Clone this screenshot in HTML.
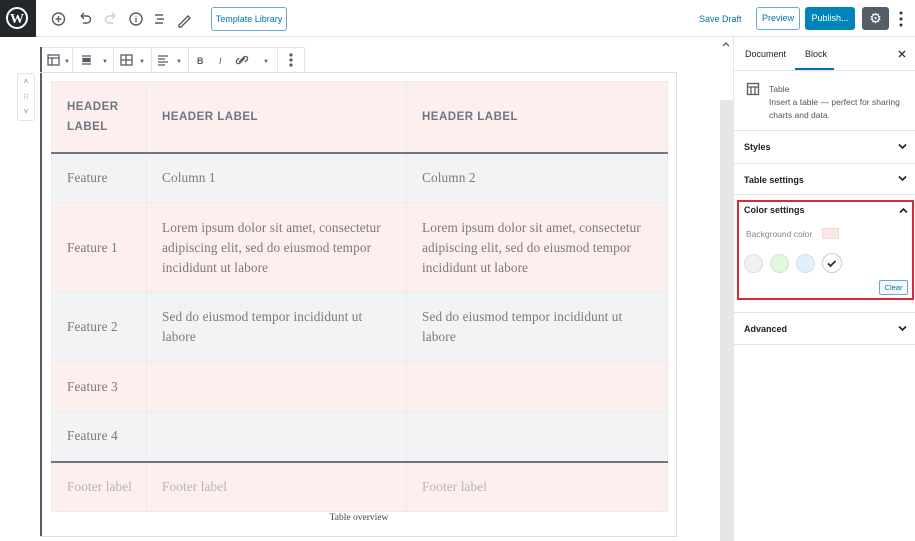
<!DOCTYPE html>
<html><head><meta charset="utf-8"><style>
*{box-sizing:border-box;margin:0;padding:0}
body{width:915px;height:541px;overflow:hidden;background:#fff;font-family:"Liberation Sans",sans-serif;position:relative}
.abs{position:absolute}
.top{left:0;top:0;width:915px;height:37px;border-bottom:1px solid #e2e4e7}
.wp{left:0;top:0;width:36px;height:37px;background:#23282d}
.tbl{left:51px;top:81px;width:616px;border-collapse:collapse;table-layout:fixed;font-family:"Liberation Serif",serif;color:#7a7a7a;font-size:13.3px;letter-spacing:.1px;line-height:20px}
.tbl td{border:1px solid #ecebeb;padding:0 15px;vertical-align:middle}
.tbl td:first-child{white-space:nowrap;padding-right:0}
.tbl .hd td:first-child{white-space:normal}
.pink td{background:#fcefed}
.gray td{background:#f2f3f5}
.hd td{font-family:"Liberation Sans",sans-serif;font-weight:bold;color:#6c7781;font-size:11.5px;letter-spacing:.5px;height:71px;border-bottom:2px solid #6c7781}
.sb{left:733px;top:37px;width:182px;height:504px;border-left:1px solid #e2e4e7}
.sec{position:absolute;left:0;width:182px;border-top:1px solid #e2e4e7;font-size:9px;font-weight:bold;color:#1e1e1e;padding-left:10px}
.chev{position:absolute;right:9px;top:50%;margin-top:-4px}
</style></head><body>
<div class="abs top"></div>
<div class="abs wp"><svg width="36" height="37"><circle cx="17" cy="18" r="10" fill="none" stroke="#fff" stroke-width="2"/><text x="17" y="23" font-size="14" font-weight="bold" fill="#fff" text-anchor="middle" font-family="Liberation Serif">W</text></svg></div>
<svg class="abs" style="left:50px;top:10px" width="150" height="18" fill="none" stroke="#555d66" stroke-width="1.4">
<circle cx="8.5" cy="9" r="6"/><path d="M8.5 6v6M5.5 9h6"/>
<path d="M31 6h6a3.5 3.5 0 010 7h-4M31 6l3-3M31 6l3 3"/>
<path d="M65 6h-6a3.5 3.5 0 000 7h4M65 6l-3-3M65 6l-3 3" stroke="#ccd0d4"/>
<circle cx="86" cy="9" r="6"/><path d="M86 8v4M86 6v.5"/>
<path d="M105 5h8M107 9h7M105 13h8"/>
<path d="M129 15l9-9 2 2-9 9h-2z"/>
</svg>
<div class="abs" style="left:211px;top:7px;width:76px;height:24px;border:1px solid #6aa9cf;border-radius:3px;font-size:9px;color:#0073aa;text-align:center;line-height:22px">Template Library</div>
<div class="abs" style="left:699px;top:14px;font-size:9px;color:#0073aa">Save Draft</div>
<div class="abs" style="left:756px;top:7px;width:44px;height:23px;border:1px solid #6aa9cf;border-radius:3px;font-size:9px;color:#0073aa;text-align:center;line-height:21px">Preview</div>
<div class="abs" style="left:805px;top:7px;width:50px;height:23px;background:#0085ba;border-radius:3px;font-size:9px;color:#fff;text-align:center;line-height:23px">Publish...</div>
<div class="abs" style="left:862px;top:7px;width:27px;height:23px;background:#555d66;border-radius:3px;color:#fff;text-align:center;line-height:23px;font-size:14px">⚙</div>
<svg class="abs" style="left:898px;top:10px" width="6" height="18"><circle cx="3" cy="3" r="1.5" fill="#333"/><circle cx="3" cy="9" r="1.5" fill="#333"/><circle cx="3" cy="15" r="1.5" fill="#333"/></svg>
<div class="abs" style="left:40px;top:47px;width:265px;height:26px;border:1px solid #e2e4e7;border-left:2px solid #555d66"></div>
<div class="abs" style="left:40px;top:47px;width:2px;height:490px;background:#555d66"></div>
<div class="abs" style="left:40px;top:72px;width:637px;height:465px;border:1px solid #ddd;border-left:none"></div>
<div class="abs" style="left:72px;top:48px;width:1px;height:24px;background:#e2e4e7"></div>
<div class="abs" style="left:113px;top:48px;width:1px;height:24px;background:#e2e4e7"></div>
<div class="abs" style="left:151px;top:48px;width:1px;height:24px;background:#e2e4e7"></div>
<div class="abs" style="left:188px;top:48px;width:1px;height:24px;background:#e2e4e7"></div>
<div class="abs" style="left:277px;top:48px;width:1px;height:24px;background:#e2e4e7"></div>
<svg class="abs" style="left:44px;top:50px" width="260" height="20" fill="none" stroke="#555d66" stroke-width="1.3" font-family="Liberation Sans" font-size="9">
<rect x="4" y="5" width="11" height="10"/><path d="M4 8h11M8 8v7"/><text x="20" y="13" stroke="none" fill="#555d66" font-size="6">▼</text>
<path d="M38 6h9M38 14h9"/><rect x="39" y="8.5" width="7" height="3" fill="#555d66"/><text x="58" y="13" stroke="none" fill="#555d66" font-size="6">▼</text>
<rect x="77" y="5" width="11" height="10"/><path d="M77 10h11M82 5v10"/><text x="95" y="13" stroke="none" fill="#555d66" font-size="6">▼</text>
<path d="M114 6h10M114 9h7M114 12h10M114 15h7"/><text x="132" y="13" stroke="none" fill="#555d66" font-size="6">▼</text>
<text x="153" y="14" stroke="none" fill="#555d66" font-weight="bold">B</text>
<text x="175" y="14" stroke="none" fill="#555d66" font-style="italic">I</text>
<path d="M195 12l5-5a2 2 0 013 3l-2 2M201 8l-5 5a2 2 0 01-3-3l2-2"/><text x="219" y="13" stroke="none" fill="#555d66" font-size="6">▼</text>
<circle cx="247" cy="5" r="1" fill="#555d66"/><circle cx="247" cy="10" r="1" fill="#555d66"/><circle cx="247" cy="15" r="1" fill="#555d66"/>
</svg>
<div class="abs" style="left:17px;top:73px;width:18px;height:48px;border:1px solid #e2e4e7;border-radius:3px;font-size:8px;color:#888;text-align:center;line-height:15px">˄<br>⁝⁝<br>˅</div>
<table class="abs tbl">
<colgroup><col style="width:95px"><col style="width:260px"><col style="width:261px"></colgroup>
<tr class="pink hd"><td>HEADER<br>LABEL</td><td>HEADER LABEL</td><td>HEADER LABEL</td></tr>
<tr class="gray"><td style="height:50px">Feature</td><td>Column 1</td><td>Column 2</td></tr>
<tr class="pink"><td style="height:90px">Feature 1</td><td>Lorem ipsum dolor sit amet, consectetur adipiscing elit, sed do eiusmod tempor incididunt ut labore</td><td>Lorem ipsum dolor sit amet, consectetur adipiscing elit, sed do eiusmod tempor incididunt ut labore</td></tr>
<tr class="gray"><td style="height:69px">Feature 2</td><td>Sed do eiusmod tempor incididunt ut<br>labore</td><td>Sed do eiusmod tempor incididunt ut<br>labore</td></tr>
<tr class="pink"><td style="height:50px">Feature 3</td><td></td><td></td></tr>
<tr class="gray"><td style="height:50px;border-bottom:2px solid #6c7781">Feature 4</td><td style="border-bottom:2px solid #6c7781"></td><td style="border-bottom:2px solid #6c7781"></td></tr>
<tr class="pink" style="color:#b5b5b5"><td style="height:50px">Footer label</td><td>Footer label</td><td>Footer label</td></tr>
</table>
<div class="abs" style="left:51px;top:513px;width:616px;text-align:center;font-family:'Liberation Serif',serif;font-size:9.5px;color:#444">Table overview</div>
<div class="abs" style="left:720px;top:100px;width:13px;height:441px;background:#e6e6e6"></div>
<svg class="abs" style="left:722px;top:41px" width="8" height="6"><path d="M1 5l3-3 3 3" fill="none" stroke="#555" stroke-width="1.3"/></svg>
<div class="abs sb">
<div class="abs" style="left:0;top:0;width:182px;height:34px;border-bottom:1px solid #e2e4e7;font-size:9px;color:#1e1e1e">
<span class="abs" style="left:11px;top:12px">Document</span><span class="abs" style="left:71px;top:12px">Block</span>
<div class="abs" style="left:61px;top:31px;width:39px;height:2px;background:#0073aa"></div>
<svg class="abs" style="left:164px;top:13px" width="8" height="8"><path d="M1 1l6 6M7 1l-6 6" stroke="#333" stroke-width="1.3"/></svg></div>
<svg class="abs" style="left:12px;top:45px" width="14" height="14" fill="none" stroke="#555d66" stroke-width="1.3"><rect x="1.5" y="1.5" width="11" height="11"/><path d="M1.5 5h11M5 5v7.5M9 5v7.5"/></svg>
<div class="abs" style="left:35px;top:46px;font-size:8.5px;color:#555;line-height:13px">Table<br>Insert a table — perfect for sharing<br>charts and data.</div>
<div class="sec" style="top:93px;height:33px;line-height:33px">Styles<svg class="chev" width="9" height="7"><path d="M1 1.5l3.5 3.5 3.5-3.5" fill="none" stroke="#222" stroke-width="1.6"/></svg></div>
<div class="sec" style="top:126px;height:32px;line-height:32px;border-bottom:1px solid #e2e4e7">Table settings<svg class="chev" width="9" height="7"><path d="M1 1.5l3.5 3.5 3.5-3.5" fill="none" stroke="#222" stroke-width="1.6"/></svg></div>
<div class="abs" style="left:3px;top:163px;width:177px;height:100px;border:2px solid #e0282e"></div>
<div class="abs" style="left:10px;top:168px;font-size:9px;font-weight:bold;color:#1e1e1e">Color settings</div>
<svg class="abs" style="left:165px;top:170px" width="9" height="7"><path d="M1 5.5l3.5-3.5 3.5 3.5" fill="none" stroke="#222" stroke-width="1.6"/></svg>
<div class="abs" style="left:12px;top:192px;font-size:8.5px;color:#888">Background color</div>
<div class="abs" style="left:88px;top:191px;width:17px;height:11px;background:#fbe9e7;border:1px solid #f3d8d5"></div>
<div class="abs" style="left:10px;top:217px;width:19px;height:19px;border-radius:50%;background:#f0f1f2;border:1px solid #ddd"></div>
<div class="abs" style="left:36px;top:217px;width:19px;height:19px;border-radius:50%;background:#e2f6e0;border:1px solid #cfe5cb"></div>
<div class="abs" style="left:62px;top:217px;width:19px;height:19px;border-radius:50%;background:#e2f0fb;border:1px solid #cfe0ee"></div>
<div class="abs" style="left:88px;top:216px;width:20px;height:20px;border-radius:50%;background:#fff;border:1px solid #ccc"><svg width="18" height="18"><path d="M5 9.5l2.5 2.5 5-5" fill="none" stroke="#222" stroke-width="1.6"/></svg></div>
<div class="abs" style="left:145px;top:243px;width:29px;height:15px;border:1px solid #6aa9cf;border-radius:2px;background:#f6f9fb;font-size:7.5px;color:#0073aa;text-align:center;line-height:13px">Clear</div>
<div class="sec" style="top:275px;height:33px;line-height:33px;border-bottom:1px solid #e2e4e7">Advanced<svg class="chev" width="9" height="7"><path d="M1 1.5l3.5 3.5 3.5-3.5" fill="none" stroke="#222" stroke-width="1.6"/></svg></div>
</div>
</body></html>
